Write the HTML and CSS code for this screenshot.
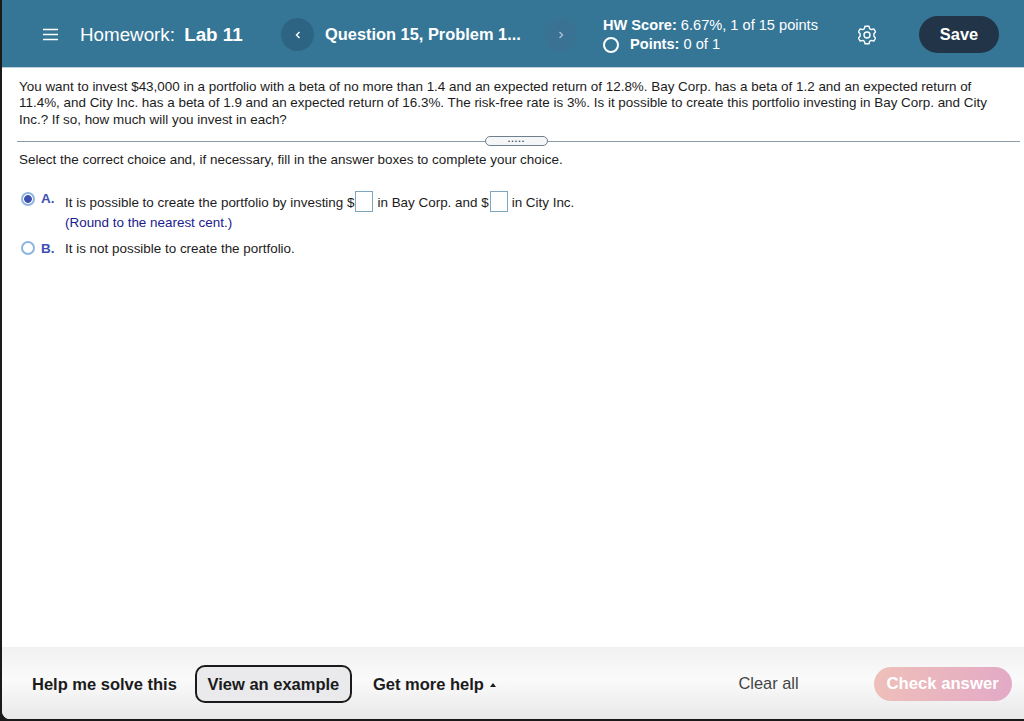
FILE: index.html
```html
<!DOCTYPE html>
<html lang="en">
<head>
    <meta charset="UTF-8">
    <title>Homework: Lab 11</title>
    <link rel="stylesheet" href="styles.css">
</head>
<body>
    <div class="window">
        <!-- Top bar -->
        <header class="topbar">
            <svg class="menu-icon" width="15" height="13" viewBox="0 0 15 13">
                <path d="M0 1.5H15M0 6.5H15M0 11.5H15" stroke="#fff" stroke-width="1.3"/>
            </svg>
            <div class="hw-title">Homework: <b>Lab 11</b></div>
            <div class="nav-btn">
                <svg width="6" height="8" viewBox="0 0 6 8"><path d="M4.5 1L1.5 4L4.5 7" fill="none" stroke="#fff" stroke-width="1.4"/></svg>
            </div>
            <div class="question-title">Question 15, Problem 1...</div>
            <div class="nav-btn nav-next">
                <svg width="6" height="8" viewBox="0 0 6 8"><path d="M1.5 1L4.5 4L1.5 7" fill="none" stroke="#a9c2d1" stroke-width="1.4"/></svg>
            </div>
            <div class="score">
                <div><b>HW Score:</b> 6.67%, 1 of 15 points</div>
                <div class="points"><span class="points-ring"></span><span><b>Points:</b> 0 of 1</span></div>
            </div>
            <svg class="gear" width="18" height="20" viewBox="0 0 18 20">
                <path d="M7 1.2H11L11.6 3.6L13.4 4.6L15.8 3.9L17.6 6.9L15.9 8.7V11.3L17.6 13.1L15.8 16.1L13.4 15.4L11.6 16.4L11 18.8H7L6.4 16.4L4.6 15.4L2.2 16.1L0.4 13.1L2.1 11.3V8.7L0.4 6.9L2.2 3.9L4.6 4.6L6.4 3.6Z" fill="none" stroke="#fff" stroke-width="1.4" stroke-linejoin="round"/>
                <circle cx="9" cy="10" r="3" fill="none" stroke="#fff" stroke-width="1.4"/>
            </svg>
            <button class="save-btn">Save</button>
        </header>

        <!-- Question -->
        <main class="content">
            <p class="question">You want to invest $43,000 in a portfolio with a beta of no more than 1.4 and an expected return of 12.8%. Bay Corp. has a beta of 1.2 and an expected return of<br>11.4%, and City Inc. has a beta of 1.9 and an expected return of 16.3%. The risk-free rate is 3%. Is it possible to create this portfolio investing in Bay Corp. and City<br>Inc.? If so, how much will you invest in each?</p>
            <div class="divider"><span class="divider-handle">.....</span></div>
            <p class="instruction">Select the correct choice and, if necessary, fill in the answer boxes to complete your choice.</p>
            <div class="choice choice-a">
                <span class="radio radio-on"></span>
                <span class="choice-letter">A.</span>
                <div class="choice-text">
                    <div class="fill-line">It is possible to create the portfolio by investing $<span class="answer-box"></span><span class="after-box">in Bay Corp. and $</span><span class="answer-box"></span><span class="after-box">in City Inc.</span></div>
                    <div class="hint">(Round to the nearest cent.)</div>
                </div>
            </div>
            <div class="choice choice-b">
                <span class="radio"></span>
                <span class="choice-letter">B.</span>
                <div class="choice-text">It is not possible to create the portfolio.</div>
            </div>
        </main>

        <!-- Bottom bar -->
        <footer class="bottombar">
            <span class="help-link">Help me solve this</span>
            <button class="example-btn">View an example</button>
            <span class="help-link more-help">Get more help <span class="caret"></span></span>
            <span class="clear-all">Clear all</span>
            <button class="check-btn">Check answer</button>
        </footer>
    </div>
</body>
</html>
```

FILE: styles.css
```css
* {
    margin: 0;
    padding: 0;
    box-sizing: border-box;
    font-family: "Liberation Sans", Arial, sans-serif;
}
html, body {
    height: 721px;
    overflow: hidden;
}
body {
    background-color: #1a1a1a;
}
.window {
    display: flex;
    flex-direction: column;
    height: 719px;
    margin-left: 2px;
    background-color: #fff;
    border-bottom-left-radius: 8px;
    overflow: hidden;
}
/* Top bar */
.topbar {
    display: flex;
    align-items: center;
    height: 68px;
    padding: 2px 0 0 41px;
    background-color: #357697;
    border-bottom: 1px solid #b9cfdc;
    color: #fff;
    flex-shrink: 0;
}
.menu-icon {
    margin-right: 22px;
}
.hw-title {
    width: 201px;
    font-size: 18.8px;
    white-space: nowrap;
}
.hw-title b {
    margin-left: 4px;
}
.nav-btn {
    display: flex;
    align-items: center;
    justify-content: center;
    width: 33px;
    height: 33px;
    border-radius: 50%;
    background-color: #2d6484;
}
.nav-next {
    background-color: #3a7294;
}
.question-title {
    width: 230px;
    padding-left: 11px;
    font-size: 16.4px;
    font-weight: bold;
    white-space: nowrap;
}
.score {
    width: 255px;
    margin: 1px 0 0 26px;
    font-size: 14.6px;
    line-height: 19px;
}
.points {
    display: flex;
    align-items: center;
    gap: 11px;
}
.points-ring {
    width: 16px;
    height: 16px;
    border: 2px solid #fff;
    border-radius: 50%;
}
.gear {
    margin-right: 43px;
}
.save-btn {
    width: 80px;
    height: 37px;
    border: none;
    border-radius: 19px;
    background-color: #223548;
    color: #fff;
    font-size: 16.4px;
    font-weight: bold;
}
/* Question */
.content {
    flex: 1;
    padding-top: 11px;
    font-size: 13.43px;
    color: #1c1c1c;
}
.question {
    padding-left: 17px;
    line-height: 16.3px;
}
.divider {
    display: flex;
    justify-content: center;
    align-items: center;
    height: 1px;
    margin: 13px 4px 0 15px;
    padding-right: 4px;
    background-color: #8a9aa6;
}
.divider-handle {
    width: 63px;
    height: 10px;
    border: 1px solid #6f7f8c;
    border-radius: 5px;
    background-color: #f4f6f8;
    font-size: 9px;
    font-weight: bold;
    line-height: 4px;
    letter-spacing: 1px;
    text-align: center;
    color: #445;
}
.instruction {
    margin-top: 10px;
    padding-left: 17px;
    line-height: 16px;
}
.choice {
    display: flex;
    align-items: flex-start;
    padding-left: 19px;
}
.choice-a {
    margin-top: 26px;
}
.choice-b {
    margin-top: 10px;
}
.radio {
    width: 14px;
    height: 14px;
    border: 2px solid #8fb4e0;
    border-radius: 50%;
    background-color: #fff;
}
.radio-on {
    margin-top: -2px;
    background: radial-gradient(circle, #3c50b4 0, #3c50b4 3.5px, #fff 4.2px);
}
.choice-letter {
    width: 24px;
    margin-left: 6px;
    font-weight: bold;
    color: #3c50b4;
}
.choice-a .choice-letter {
    margin-top: -3px;
}
.choice-text {
    line-height: 16px;
}
.choice-a .choice-text {
    margin-top: -1px;
}
.fill-line {
    display: flex;
    align-items: center;
    height: 20px;
    white-space: nowrap;
}
.answer-box {
    width: 18px;
    height: 21px;
    margin: -3px 0 0 1px;
    border: 1px solid #7fa6bf;
    background-color: #fff;
}
.after-box {
    margin-left: 4px;
}
.hint {
    margin-top: 2px;
    color: #1a2090;
}
/* Bottom bar */
.bottombar {
    display: flex;
    align-items: center;
    height: 72px;
    padding: 2px 0 0 30px;
    background: linear-gradient(#f1f1f2, #fafafa 45%, #e9e9ea);
    flex-shrink: 0;
}
.help-link {
    font-size: 16.5px;
    font-weight: bold;
    color: #1b1b1b;
    white-space: nowrap;
}
.example-btn {
    width: 157px;
    height: 38px;
    margin-left: 18px;
    border: 2px solid #1b1b1b;
    border-radius: 10px;
    background-color: #eaeaec;
    color: #1b1b1b;
    font-size: 16.5px;
    font-weight: bold;
}
.more-help {
    margin-left: 21px;
}
.caret {
    display: inline-block;
    width: 0;
    height: 0;
    margin-left: 2px;
    vertical-align: 3px;
    border-left: 3.5px solid transparent;
    border-right: 3.5px solid transparent;
    border-bottom: 4px solid #1b1b1b;
}
.clear-all {
    margin: -2px 0 0 242px;
    font-size: 16.4px;
    color: #444;
}
.check-btn {
    width: 138px;
    height: 34px;
    margin-left: 75px;
    border: none;
    border-radius: 17px;
    background: linear-gradient(100deg, #efc0b9, #e3a9c6);
    color: #fff;
    font-size: 16.7px;
    font-weight: bold;
}
```
